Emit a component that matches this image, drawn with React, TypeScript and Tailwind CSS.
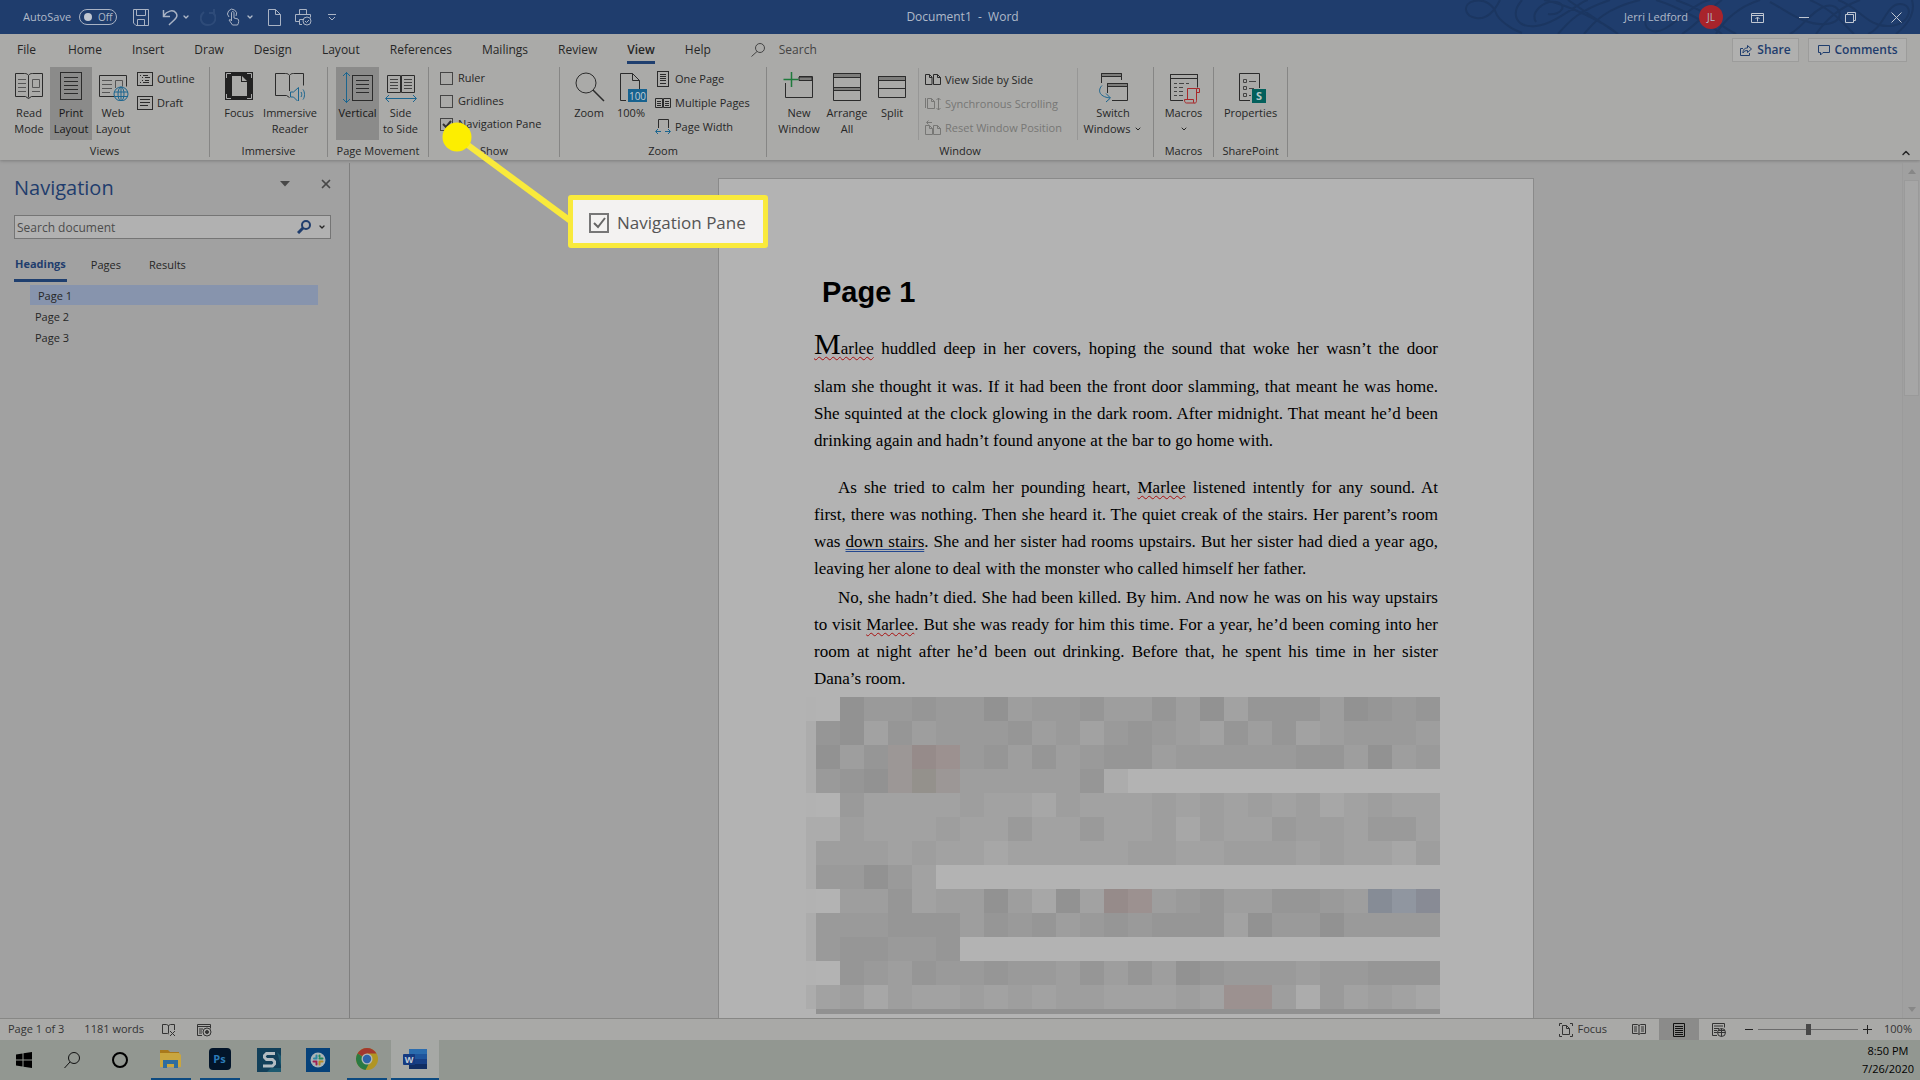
import type { ReactNode } from 'react'
import { ChevronDown, ChevronUp, X } from 'lucide-react'

const INK = '#2b2b2b'
const BLUE = '#1b658f'

function Svg({ w, h, children, stroke = INK, sw = 1, className = '' }: {
  w: number
  h: number
  children: ReactNode
  stroke?: string
  sw?: number
  className?: string
}) {
  return (
    <svg width={w} height={h} viewBox={`0 0 ${w} ${h}`} fill="none" stroke={stroke} strokeWidth={sw} className={`shrink-0 ${className}`} aria-hidden="true">
      {children}
    </svg>
  )
}

/* ---------- ribbon icons ---------- */

const ReadModeIcon = () => (
  <Svg w={30} h={30}>
    <path d="M14.5 4.5c-1-1.5-2-2-4-2h-9v23h10l3 2 3-2h11v-23h-10c-2 0-3 .5-4 2v22" />
    <path d="M4 8.500h8M4 12.500h8M4 16.500h8M4 20.500h8M18.500 8.500h7v8h-7zM18 20.500h8" stroke="#555" />
  </Svg>
)

const PrintLayoutIcon = () => (
  <Svg w={30} h={30}>
    <rect x="4.500" y="1.500" width="21" height="27" />
    <path d="M8 6.500h14M8 10.500h14M8 14.500h14M8 18.500h14M8 22.500h14" />
  </Svg>
)

const WebLayoutIcon = () => (
  <Svg w={32} h={30}>
    <path d="M17 25.500H2.500v-21h27v11" />
    <path d="M5 9.500h10M5 13.500h10M5 17.500h10M5 21.500h8M18.500 17V9.500h7v6" stroke="#555" />
    <g stroke={BLUE}>
      <circle cx="24" cy="23" r="7" />
      <ellipse cx="24" cy="23" rx="3" ry="7" />
      <path d="M17 21h14M17 25.500h14M24 16v14" />
    </g>
  </Svg>
)

const OutlineIcon = () => (
  <Svg w={16} h={14}>
    <rect x=".5" y=".5" width="15" height="13" />
    <path d="M3 3.500h1M6 3.500h5M5 5.500h1M8 5.500h5M5 8.500h1M8 8.500h4M3 10.500h1M6 10.500h6" />
  </Svg>
)

const DraftIcon = () => (
  <Svg w={16} h={14}>
    <rect x=".5" y=".5" width="15" height="13" />
    <path d="M3 3.500h10M3 6.500h10M3 9.500h8" />
  </Svg>
)

const FocusIcon = () => (
  <Svg w={30} h={30}>
    <rect x="1" y="1" width="28" height="28" fill="#222" stroke="none" />
    <path d="M2.500 7V2.500H7M23 2.500h4.500V7M27.500 23v4.500H23M7 27.500H2.500V23" stroke="#aaa" />
    <path d="M8 5h9v6h6v14H8zM18 5l5 5h-5z" fill="#aaaaa8" stroke="none" />
  </Svg>
)

const ImmersiveReaderIcon = () => (
  <Svg w={32} h={30}>
    <path d="M15.500 4.500c-1-1.500-2-2-4-2h-10v22h11l3 2M15.500 20V4.500c1-1.500 2-2 4-2h10v12" />
    <path d="M16.500 21v5h3l5 5V16.500l-5 4.500zM27 21c1 1.500 1 3.500 0 5M29 18.500c2 2.500 2 7.500 0 10" stroke={BLUE} />
  </Svg>
)

const VerticalIcon = () => (
  <Svg w={32} h={34}>
    <rect x="10.500" y="4.500" width="20" height="25" />
    <path d="M14 9.500h13M14 13.500h13M14 17.500h13M14 21.500h13" />
    <path d="M4.500 1v31M1 5l3.500-3.500L8 5M1 28l3.500 3.500L8 28" stroke={BLUE} />
  </Svg>
)

const SideToSideIcon = () => (
  <Svg w={34} h={32}>
    <path d="M3.500 4.500h13v17h-13zM17.500 4.500h13v17h-13z" />
    <path d="M6 8.500h8M6 11.500h8M6 14.500h8M6 17.500h8M20 8.500h8M20 11.500h8M20 14.500h8M20 17.500h8" stroke="#444" />
    <path d="M2 27.500h30M5 24l-3.500 3.500L5 31M29 24l3.500 3.500L29 31" stroke={BLUE} />
  </Svg>
)

const ZoomIcon = () => (
  <Svg w={32} h={32}>
    <circle cx="13" cy="12" r="10" />
    <path d="M20 19l11 11" strokeWidth="1.500" />
  </Svg>
)

const HundredIcon = () => (
  <Svg w={32} h={32}>
    <path d="M11 29.500H5.500v-27h12l7 7V18M17.500 2.500v7h7" />
    <rect x="13" y="18" width="19" height="13" fill="#17628f" stroke="none" />
    <text x="22.500" y="28.500" textAnchor="middle" fontSize="10" fontFamily="Open Sans" fill="#c4cdd3" stroke="none">100</text>
  </Svg>
)

const OnePageIcon = () => (
  <Svg w={16} h={16}>
    <rect x="2.500" y=".5" width="11" height="15" />
    <path d="M5 3.500h6M5 5.500h6M5 7.500h6M5 9.500h6M5 12.500h6" />
  </Svg>
)

const MultiPagesIcon = () => (
  <Svg w={16} h={12}>
    <path d="M.5 1.500h7v9h-7zM8.500 1.500h7v9h-7z" />
    <path d="M2 4.500h4M2 6.500h4M2 8.500h4M10 4.500h4M10 6.500h4M10 8.500h4" />
  </Svg>
)

const PageWidthIcon = () => (
  <Svg w={16} h={16}>
    <path d="M3.500 9V.5h10V9" />
    <path d="M1 12.500h5M10 12.500h5M3 10l-2.500 2.500L3 15M13 10l2.500 2.500L13 15" stroke={BLUE} />
  </Svg>
)

const NewWindowIcon = () => (
  <Svg w={32} h={32}>
    <path d="M2.500 12v14.500h27v-21H16" />
    <path d="M16 6h13v3.500H16z" fill="#7d7d7b" />
    <path d="M.5 8.500h15M8.500 1v15" stroke="#1f7a3c" strokeWidth="1.500" />
  </Svg>
)

const ArrangeIcon = () => (
  <Svg w={32} h={32}>
    <path d="M2.500 2.500h27v4h-27zM2.500 16.500h27v3h-27z" fill="#7d7d7b" />
    <path d="M2.500 2.500h27v27h-27z" />
  </Svg>
)

const SplitIcon = () => (
  <Svg w={32} h={32}>
    <path d="M2.500 5.500h27v4h-27z" fill="#7d7d7b" />
    <path d="M2.500 5.500h27v21h-27zM3 17.500h26" />
  </Svg>
)

const SideBySideIcon = () => (
  <Svg w={16} h={12}>
    <path d="M.5 10.500V.5h4l2.500 2.500v7.500zM8.500 10.500V.5h4l3 3v7zM4.500.5v3H7M12.500.5v3h3" />
  </Svg>
)

const SyncScrollIcon = () => (
  <Svg w={16} h={14} stroke="#777775">
    <path d="M.5 1v10M2.500 11.500V1.500h4l3 3v7zM6.500 1.500v3h3M13.500 1v12M11.500 3l2-2 2 2M11.500 11l2 2 2-2" />
  </Svg>
)

const ResetPosIcon = () => (
  <Svg w={16} h={16} stroke="#777775">
    <path d="M.5 14.500v-9h4l3 3v6zM8.500 14.500v-9h4l3 3v6zM4.500 5.500v3h3M12.500 5.500v3h3M7 2.500H2M3.500.5l-2 2 2 2" />
  </Svg>
)

const SwitchIcon = () => (
  <Svg w={32} h={34}>
    <path d="M4.500 12V2.500h20V9" />
    <path d="M4.500 2.500h20v3h-20zM10.500 12.500h20v3h-20z" fill="#7d7d7b" />
    <path d="M15 29.500h15.500v-17h-20V22" />
    <path d="M5 14.500c-4 4-4 11 8 12.500M9 22.500l4.500 4.500L9 31" stroke={BLUE} />
  </Svg>
)

const MacrosIcon = () => (
  <Svg w={32} h={34}>
    <path d="M15 29.500H2.500v-26h27v13" />
    <path d="M2.500 3.500h27v4h-27z" />
    <path d="M6 12.500h3M11 12.500h5M18 12.500h3M6 16.500h3M11 16.500h4M6 20.500h3M11 20.500h4M6 24.500h3M11 24.500h4" stroke="#444" />
    <path d="M19.500 28V17.500h9M28.500 17.500v12c0 3-2 3-3 2v-3h-9c0 3 1 3.500 2 3.500h8M28.500 17.500h3v4h-3" stroke="#a8282a" />
  </Svg>
)

const PropertiesIcon = () => (
  <Svg w={32} h={34}>
    <path d="M15 29.500H4.500v-27h20V17" />
    <path d="M8.500 8.500h3v3h-3zM8.500 15.500h3v3h-3zM8.500 22.500h3v3h-3zM14 10.500h7M14 17.500h5M14 24.500h2" stroke="#444" />
    <rect x="17" y="18" width="14" height="14" fill="#03605c" stroke="none" />
    <text x="24" y="29" textAnchor="middle" fontSize="11" fontWeight="700" fontFamily="Open Sans" fill="#b7c9c7" stroke="none">S</text>
  </Svg>
)

/* ---------- ribbon pieces ---------- */

function BigButton({ icon, lines, width, active, caret }: {
  icon: ReactNode
  lines: string[]
  width: string
  active?: boolean
  caret?: boolean
}) {
  return (
    <button className={`${width} h-[73px] shrink-0 flex flex-col items-center pt-1 ${active ? 'bg-[#8b8b8a] text-[#161616]' : ''}`}>
      <span className="h-[34px] flex items-start justify-center">{icon}</span>
      {lines.map((line, i) => (
        <span key={line} className="flex items-center gap-1 leading-4 whitespace-nowrap">
          {line}
          {caret && i === lines.length - 1 && lines.length > 1 && <ChevronDown size={8} strokeWidth={3} />}
        </span>
      ))}
      {caret && lines.length === 1 && <span className="h-4 flex items-center"><ChevronDown size={8} strokeWidth={3} /></span>}
    </button>
  )
}

function SmallButton({ icon, label, disabled }: { icon: ReactNode; label: string; disabled?: boolean }) {
  return (
    <button disabled={disabled} className={`h-6 flex items-center gap-1 whitespace-nowrap ${disabled ? 'text-[#777775]' : ''}`}>
      <span className="w-4 flex justify-center">{icon}</span>
      {label}
    </button>
  )
}

function Group({ label, width, children }: { label: string; width: string; children: ReactNode }) {
  return (
    <div className={`${width} h-[90px] shrink-0 flex flex-col border-r border-[#868685]`}>
      <div className="h-[78px] shrink-0 flex items-start">{children}</div>
      <div className="text-center leading-3">{label}</div>
    </div>
  )
}

function Check({ label, checked }: { label: string; checked?: boolean }) {
  return (
    <label className="relative h-[23px] flex items-center gap-[5px] whitespace-nowrap">
      <input type="checkbox" defaultChecked={checked} className="appearance-none size-[13px] border border-[#444]" />
      {checked && (
        <Svg w={13} h={13} stroke="#333" sw={2} className="absolute left-0">
          <path d="M3 6l3 3 5-6" />
        </Svg>
      )}
      {label}
    </label>
  )
}

/* ---------- title bar ---------- */

function TitleBar() {
  const ink = '#a9b3c4'
  return (
    <header className="relative h-[34px] shrink-0 flex items-center bg-[#1f3d6d] text-[#b0bac9] text-[11px]">
      <svg className="absolute right-0 top-0" width="460" height="34" viewBox="0 0 460 34" fill="none" stroke="#1b3661" strokeWidth="2" aria-hidden="true">
        <path d="M40 0c-4 8-12 20-24 18S2 4 14 1s20 6 22 12 14 16 26 20" />
        <path d="M76 22c-6-10 8-22 20-20s6 14-8 12M62 0c-12 14-6 28 14 26s46-26 52-26M84 0c22 4 60 22 74 34M108 0l50 34M150 0c-30 10-40 20-52 34M180 0c-34 8-46 22-56 34" />
        <path d="M188 14c-8 14 4 22 18 14S236 2 250 0M196 0c20 6 50 22 66 34M216 0c30 10 40 24 60 34M262 0c-12 8-22 22-40 34M300 0c-20 6-36 20-44 34M310 2c16 8 34 24 56 22s14-22 0-18-24 22-36 28" />
        <path d="M350 0c20 8 32 22 44 34M400 0c-22 8-34 20-44 34M378 0c20 6 30 28 52 26s24-22 10-22-16 24-32 30M452 0c4 14-6 26-16 34" />
      </svg>
      <div className="relative flex-1 flex items-center pl-[23px]">
        <span>AutoSave</span>
        <button role="switch" aria-checked="false" className="ml-2 w-[38px] h-4 rounded-full border border-[#a9b3c4] flex items-center gap-[6px] pl-1 text-[10px]">
          <span className="size-2 rounded-full bg-[#c0c7d2]" />
          Off
        </button>
        <button aria-label="Save" className="ml-4">
          <Svg w={16} h={17} stroke={ink}><path d="M.5.5h15v16H3l-2.500-2.500zM3.500.5v6h9v-6M4.500 16.500v-6h7v6" /></Svg>
        </button>
        <button aria-label="Undo" className="ml-[13px]">
          <Svg w={16} h={17} stroke={ink}><path d="M1.500 1v6.500H8M1.500 7C5 2 11 0 14 4s-2 7-7 12" strokeWidth="1.500" /></Svg>
        </button>
        <button aria-label="Undo history" className="ml-1"><ChevronDown size={8} strokeWidth={4} /></button>
        <button aria-label="Redo" className="ml-[10px]">
          <Svg w={16} h={17} stroke="#2e4b79"><path d="M4 3c-6 5-3 13 4 13s10-8 5-12M9 4h5V0" strokeWidth="2" /></Svg>
        </button>
        <button aria-label="Touch mode" className="ml-[10px]">
          <Svg w={14} h={18} stroke={ink}><path d="M3 9a4.500 4.500 0 1 1 7-1M5.500 13V5c0-2 2.500-2 2.500 0v5l4 1c1 .5 1 4-.5 6h-5L3 12c1-1 2 0 2.500 1" /></Svg>
        </button>
        <button aria-label="Touch mode options" className="ml-[6px]"><ChevronDown size={8} strokeWidth={4} /></button>
        <button aria-label="New" className="ml-[14px]">
          <Svg w={13} h={17} stroke={ink}><path d="M.5.5h7l5 5v11H.5zM7.500.5v5h5" /></Svg>
        </button>
        <button aria-label="Print preview" className="ml-[14px]">
          <Svg w={17} h={17} stroke={ink}><path d="M4.500 5.500v-5h7v5M4 12.500H.5v-7h15v3M7 15.500H4.500v-5H8" /><circle cx="12" cy="12" r="4" /><path d="M10 12l1.500 1.500L14 11" /></Svg>
        </button>
        <button aria-label="Customize toolbar" className="ml-4">
          <Svg w={8} h={8} stroke={ink}><path d="M0 1.500h8M1 4l3 3 3-3" /></Svg>
        </button>
      </div>
      <div className="relative whitespace-pre text-[12px]">Document1  -  Word</div>
      <div className="relative flex-1 flex items-center justify-end pr-[18px]">
        <span>Jerri Ledford</span>
        <span className="ml-[11px] size-6 rounded-full bg-[#a8242b] flex items-center justify-center text-[10px]">JL</span>
        <button aria-label="Ribbon display options" className="ml-7">
          <Svg w={13} h={11} stroke="#c0c7d2"><path d="M.5 1.500h12v9H.5zM.5 3.500h12M6.500 9.500v-4M4.500 7l2-2 2 2" /></Svg>
        </button>
        <button aria-label="Minimize" className="ml-[35px] w-[10px] h-[10px] flex items-center"><span className="w-full h-px bg-[#c0c7d2]" /></button>
        <button aria-label="Restore" className="ml-9">
          <Svg w={11} h={11} stroke="#c0c7d2"><path d="M.5 2.500h8v8h-8zM2.500 2.500v-2h8v8h-2" /></Svg>
        </button>
        <button aria-label="Close" className="ml-[35px]">
          <Svg w={11} h={11} stroke="#c0c7d2"><path d="M.5.5l10 10M10.500.5l-10 10" /></Svg>
        </button>
      </div>
    </header>
  )
}

/* ---------- ribbon ---------- */

const TABS = ['Home', 'Insert', 'Draw', 'Design', 'Layout', 'References', 'Mailings', 'Review', 'View', 'Help']

function TabRow() {
  return (
    <div className="h-[33px] shrink-0 flex items-center pl-[17px] pr-[13px] pb-[2px] text-[12px]">
      <nav className="flex items-center">
        <button className="mr-8">File</button>
        <div className="flex items-center gap-[30px]">
          {TABS.map(tab => (
            <button key={tab} className={tab === 'View' ? 'h-7 pt-[3px] border-b-[3px] border-[#1f3f6f] font-semibold' : ''}>
              {tab}
            </button>
          ))}
        </div>
      </nav>
      <button className="ml-10 flex items-center gap-[14px] text-[#444]">
        <Svg w={14} h={14} stroke="#444"><circle cx="9" cy="5" r="4.500" /><path d="M6 8.500l-5.500 5" /></Svg>
        Search
      </button>
      <div className="ml-auto flex gap-[9px] font-semibold text-[#1f3d6d]">
        <button className="h-6 w-[67px] flex items-center justify-center gap-[5px] border border-[#9c9c9b] bg-[#b0b0af]">
          <Svg w={12} h={12} stroke="#1f3d6d"><path d="M3 4.500H.5v7h9V9M3 9c0-4 2-5 4.500-5V1.500L11.500 5 7.500 8.500V6.500C5.500 6.500 4 7 3 9z" /></Svg>
          Share
        </button>
        <button className="h-6 w-[99px] flex items-center justify-center gap-[5px] border border-[#9c9c9b] bg-[#b0b0af]">
          <Svg w={12} h={12} stroke="#1f3d6d"><path d="M.5 1.500h11v7H5l-2.500 2.500V8.500h-2z" /></Svg>
          Comments
        </button>
      </div>
    </div>
  )
}

function Ribbon() {
  return (
    <div className="h-[93px] shrink-0 flex text-[11px]">
      <Group label="Views" width="w-[210px]">
        <div className="w-2" />
        <BigButton icon={<ReadModeIcon />} lines={['Read', 'Mode']} width="w-[42px]" />
        <BigButton icon={<PrintLayoutIcon />} lines={['Print', 'Layout']} width="w-[42px]" active />
        <BigButton icon={<WebLayoutIcon />} lines={['Web', 'Layout']} width="w-[42px]" />
        <div className="flex flex-col pl-[3px]">
          <SmallButton icon={<OutlineIcon />} label="Outline" />
          <SmallButton icon={<DraftIcon />} label="Draft" />
        </div>
      </Group>
      <Group label="Immersive" width="w-[118px]">
        <div className="w-2" />
        <BigButton icon={<FocusIcon />} lines={['Focus']} width="w-[42px]" />
        <BigButton icon={<ImmersiveReaderIcon />} lines={['Immersive', 'Reader']} width="w-[60px]" />
      </Group>
      <Group label="Page Movement" width="w-[101px]">
        <div className="w-2" />
        <BigButton icon={<VerticalIcon />} lines={['Vertical']} width="w-[43px]" active />
        <BigButton icon={<SideToSideIcon />} lines={['Side', 'to Side']} width="w-[43px]" />
      </Group>
      <Group label="Show" width="w-[131px]">
        <div className="flex flex-col pl-[11px]">
          <Check label="Ruler" />
          <Check label="Gridlines" />
          <Check label="Navigation Pane" checked />
        </div>
      </Group>
      <Group label="Zoom" width="w-[207px]">
        <div className="w-2" />
        <BigButton icon={<ZoomIcon />} lines={['Zoom']} width="w-[42px]" />
        <BigButton icon={<HundredIcon />} lines={['100%']} width="w-[42px]" />
        <div className="flex flex-col pl-[3px]">
          <SmallButton icon={<OnePageIcon />} label="One Page" />
          <SmallButton icon={<MultiPagesIcon />} label="Multiple Pages" />
          <SmallButton icon={<PageWidthIcon />} label="Page Width" />
        </div>
      </Group>
      <Group label="Window" width="w-[387px]">
        <div className="w-2" />
        <BigButton icon={<NewWindowIcon />} lines={['New', 'Window']} width="w-[48px]" />
        <BigButton icon={<ArrangeIcon />} lines={['Arrange', 'All']} width="w-[48px]" />
        <BigButton icon={<SplitIcon />} lines={['Split']} width="w-[42px]" />
        <div className="ml-[5px] mt-px w-[160px] border-x border-[#979796] pl-[6px] flex flex-col">
          <SmallButton icon={<SideBySideIcon />} label="View Side by Side" />
          <SmallButton icon={<SyncScrollIcon />} label="Synchronous Scrolling" disabled />
          <SmallButton icon={<ResetPosIcon />} label="Reset Window Position" disabled />
        </div>
        <BigButton icon={<SwitchIcon />} lines={['Switch', 'Windows']} width="w-[70px]" caret />
      </Group>
      <Group label="Macros" width="w-[60px]">
        <BigButton icon={<MacrosIcon />} lines={['Macros']} width="w-[59px]" caret />
      </Group>
      <Group label="SharePoint" width="w-[74px]">
        <BigButton icon={<PropertiesIcon />} lines={['Properties']} width="w-[73px]" />
      </Group>
      <button aria-label="Collapse the ribbon" className="ml-auto mr-2 self-end mb-px"><ChevronUp size={12} strokeWidth={3} /></button>
    </div>
  )
}

/* ---------- navigation pane ---------- */

function NavigationPane() {
  return (
    <aside className="w-[350px] shrink-0 border-r border-[#7f7f7f] text-[11px]">
      <div className="flex items-center pl-[14px] pr-4 h-[50px]">
        <h2 className="text-[20px] text-[#1f3d6d]">Navigation</h2>
        <button aria-label="Pane options" className="ml-auto mb-2">
          <Svg w={10} h={6}><path d="M0 0h10L5 5.500z" fill="#484848" stroke="none" /></Svg>
        </button>
        <button aria-label="Close pane" className="ml-[29px] mb-2 text-[#484848]"><X size={14} strokeWidth={3} /></button>
      </div>
      <div className="mt-[2px] ml-[14px] mr-[18px] h-6 flex items-center border border-[#757575] bg-[#b1b1b1] pr-1">
        <input aria-label="Search document" placeholder="Search document" className="flex-1 min-w-0 h-full pl-[2px] outline-none placeholder:text-[#4c4c4c] text-[12px]" />
        <button aria-label="Search">
          <Svg w={15} h={14} stroke="#1f3d6d" sw={2}><circle cx="9" cy="5" r="4" /><path d="M6 8l-5 5" strokeWidth="3" /></Svg>
        </button>
        <button aria-label="Search options" className="ml-[6px]"><ChevronDown size={8} strokeWidth={4} /></button>
      </div>
      <div role="tablist" className="mt-[14px] ml-[14px] flex items-start">
        <button role="tab" aria-selected="true" className="h-[29px] px-px pb-1 border-b-[3px] border-[#1f3f6f] font-bold text-[#1f3d6d]">Headings</button>
        <button role="tab" aria-selected="false" className="ml-6 h-[25px]">Pages</button>
        <button role="tab" aria-selected="false" className="ml-7 h-[25px]">Results</button>
      </div>
      <ul className="mt-[3px] ml-[30px] mr-[31px] leading-[21px]">
        <li><a href="#page-1" className="block h-5 leading-[21px] pl-2 bg-[#8794ad]">Page 1</a></li>
        <li><a href="#page-2" className="block pl-[5px] mt-px">Page 2</a></li>
        <li><a href="#page-3" className="block pl-[5px]">Page 3</a></li>
      </ul>
    </aside>
  )
}

/* ---------- document ---------- */

function Line({ children, last, indent }: { children: ReactNode; last?: boolean; indent?: boolean }) {
  return (
    <span className={`block whitespace-nowrap ${indent ? 'pl-6' : ''} ${last ? '' : '[text-align-last:justify]'}`}>
      {children}
    </span>
  )
}

function Typo({ children }: { children: ReactNode }) {
  return <span className="underline decoration-wavy decoration-[#a80f0f] decoration-1 underline-offset-2">{children}</span>
}

// One digit per tile: 0 is the darkest grey, 8 almost paper. Letters are tinted tiles.
const TILE_ROWS = [
  ' 1332331433244241522241232',
  '21524333243532345242543334',
  '142trs32424322433333224143',
  '321tut444442' + '7             ',
  ' 3555545564555454545465455',
  '74555455355355464553445335',
  '44454556555554455444545564',
  '33135' + '                     ',
  ' 44254414615rs432442234bcd',
  '33322242324323222513313333',
  '322332' + '                    ',
  ' 2342332334242412333433222',
  '54645545454455545ss4735456',
]

const TILE_GREYS = ['#8d8d8d', '#929292', '#969696', '#9a9a9a', '#9e9e9e', '#a2a2a2', '#a7a7a7', '#acacac', '#b0b0b0']
const TILE_TINTS: Record<string, string> = {
  r: '#968b8a',
  s: '#9c9190',
  t: '#9c9796',
  u: '#94918c',
  b: '#868c96',
  c: '#9096a0',
  d: '#888b95',
  ' ': '#b3b3b3',
}

function tileColor(tile: string) {
  return TILE_TINTS[tile] ?? TILE_GREYS[Number(tile)]
}

function RedactedText() {
  return (
    <div className="-ml-2 -mr-[2px] mt-[5px]" aria-hidden="true">
      {TILE_ROWS.map((row, y) => (
        <div key={y} className="h-6 flex">
          <span className={`w-[10px] ${row[0] === ' ' ? 'bg-[#b2b2b2]' : 'bg-[#acacac]'}`} />
          {row.split('').map((tile, x) => (
            <span key={x} className="flex-1" style={{ backgroundColor: tileColor(tile) }} />
          ))}
        </div>
      ))}
      <div className="ml-[10px] h-[5px] bg-[#919191]" />
    </div>
  )
}

function DocumentPage() {
  return (
    <article className="mx-auto mt-[15px] w-[816px] h-full border border-[#8a8a8a] bg-[#b3b3b3] px-[95px] text-black">
      <h1 className="mt-[95px] pl-2 font-['Liberation_Sans',sans-serif] font-bold text-[29px] leading-9">Page 1</h1>
      <div className="font-['Liberation_Serif',serif] text-[17px] leading-[27px]">
        <p className="mt-[10px]">
          <span className="block leading-[48px]"><Line><Typo><span className="text-[30px]">M</span>arlee</Typo> huddled deep in her covers, hoping the sound that woke her wasn’t the door</Line></span>
          <Line>slam she thought it was. If it had been the front door slamming, that meant he was home.</Line>
          <Line>She squinted at the clock glowing in the dark room. After midnight. That meant he’d been</Line>
          <Line last>drinking again and hadn’t found anyone at the bar to go home with.</Line>
        </p>
        <p className="mt-5">
          <Line indent>As she tried to calm her pounding heart, <Typo>Marlee</Typo> listened intently for any sound. At</Line>
          <Line>first, there was nothing. Then she heard it. The quiet creak of the stairs. Her parent’s room</Line>
          <Line>was <span className="underline decoration-double decoration-[#24488f] decoration-1 underline-offset-2">down stairs</span>. She and her sister had rooms upstairs. But her sister had died a year ago,</Line>
          <Line last>leaving her alone to deal with the monster who called himself her father.</Line>
        </p>
        <p className="mt-[2px]">
          <Line indent>No, she hadn’t died. She had been killed. By him. And now he was on his way upstairs</Line>
          <Line>to visit <Typo>Marlee</Typo>. But she was ready for him this time. For a year, he’d been coming into her</Line>
          <Line>room at night after he’d been out drinking. Before that, he spent his time in her sister</Line>
          <Line last>Dana’s room.</Line>
        </p>
      </div>
      <RedactedText />
    </article>
  )
}

function ScrollBar() {
  return (
    <div className="w-[18px] shrink-0 flex flex-col items-center border-l border-[#9b9b9b] bg-[#a0a0a0]">
      <span className="h-[17px] flex items-center"><Svg w={8} h={5}><path d="M4 0l4 5H0z" fill="#878787" stroke="none" /></Svg></span>
      <span className="w-[15px] h-[216px] bg-[#a6a6a6] border border-[#9a9a9a]" />
      <span className="mt-auto h-[17px] flex items-center"><Svg w={8} h={5}><path d="M0 0h8L4 5z" fill="#878787" stroke="none" /></Svg></span>
    </div>
  )
}

/* ---------- status bar ---------- */

function StatusBar() {
  return (
    <footer className="h-[22px] shrink-0 flex items-center bg-[#a9a9a7] border-t border-[#878785] text-[11px] text-[#333] pl-2 pr-2">
      <span>Page 1 of 3</span>
      <span className="ml-5">1181 words</span>
      <button aria-label="Proofing errors" className="ml-[18px]">
        <Svg w={14} h={14} stroke="#333"><path d="M6.500 11l-1-.5h-5V1.500h4l2 1v8M6.500 2.500l2-1h4V7M8 8l5 5M13 8l-5 5" /></Svg>
      </button>
      <button aria-label="Macro recording" className="ml-[21px]">
        <Svg w={15} h={14} stroke="#333"><path d="M5 12.500H.5v-11h13v4M.5 3.500h13M2 6h4M2 8h3M2 10h3" /><circle cx="10" cy="9" r="4" /><circle cx="10" cy="9" r="1.500" fill="#333" /></Svg>
      </button>
      <button className="ml-auto flex items-center gap-1">
        <Svg w={14} h={14} stroke="#333"><path d="M.5 3V.5H3M11 .5h2.500V3M13.500 11v2.500H11M3 13.500H.5V11M3.500 2.500h4l3 3v6h-7zM7.500 2.500v3h3" /></Svg>
        Focus
      </button>
      <button aria-label="Read mode" className="ml-[25px]">
        <Svg w={14} h={13} stroke="#333"><path d="M.5 1.500h5l1.500 1 1.500-1h5v9h-5l-1.500 1-1.500-1h-5zM7 2v9M2 4h3M2 6h3M2 8h3M9 4h3M9 6h3M9 8h3" /></Svg>
      </button>
      <button aria-label="Print layout" className="ml-[13px] w-10 h-full flex items-center justify-center bg-[#8b8b8a]">
        <Svg w={12} h={14} stroke="#111"><path d="M.5.5h11v13H.5zM2 3.500h8M2 5.500h8M2 7.500h8M2 9.500h8M2 11.500h8" /></Svg>
      </button>
      <button aria-label="Web layout" className="ml-[13px]">
        <Svg w={14} h={14} stroke="#333"><path d="M5 12.500H.5v-12h12v4M2 3h9M2 5.500h5M2 7.500h3M2 9.500h3" /><circle cx="9.500" cy="9.500" r="4" /><path d="M5.500 9.500h8M9.500 5.500v8M6 7.500h7" /></Svg>
      </button>
      <button aria-label="Zoom out" className="ml-[19px] w-2 h-2 flex items-center"><span className="w-full h-px bg-[#222]" /></button>
      <input
        type="range"
        aria-label="Zoom"
        min={0}
        max={100}
        defaultValue={50}
        className="ml-[5px] w-[100px] h-3 appearance-none bg-transparent [&::-webkit-slider-runnable-track]:h-px [&::-webkit-slider-runnable-track]:bg-[#6b6b6b] [&::-webkit-slider-thumb]:appearance-none [&::-webkit-slider-thumb]:w-[5px] [&::-webkit-slider-thumb]:h-[11px] [&::-webkit-slider-thumb]:-mt-[5px] [&::-webkit-slider-thumb]:bg-[#484848]"
      />
      <button aria-label="Zoom in" className="ml-[5px]">
        <Svg w={9} h={9} stroke="#222"><path d="M0 4.500h9M4.500 0v9" /></Svg>
      </button>
      <span className="ml-3">100%</span>
    </footer>
  )
}

/* ---------- taskbar ---------- */

function TaskButton({ label, children, width = 'w-[49px]', open, active }: {
  label: string
  children: ReactNode
  width?: string
  open?: boolean
  active?: boolean
}) {
  return (
    <button aria-label={label} className={`${width} h-full shrink-0 flex flex-col items-center ${active ? 'bg-[#a6a8a5]' : ''}`}>
      <span className="flex-1 flex items-center justify-center">{children}</span>
      {(open || active) && <span className={`h-[2px] bg-[#0d4a80] ${active ? 'w-full' : 'w-10'}`} />}
    </button>
  )
}

function TaskBar() {
  return (
    <div className="h-10 shrink-0 flex items-center bg-[#929791] text-black">
      <TaskButton label="Start" width="w-12">
        <Svg w={16} h={16}><path d="M0 2.500l6.500-1v6H0zM7.500 1.300L16 0v7.500H7.500zM0 8.500h6.500v6l-6.500-1zM7.500 8.500H16V16l-8.500-1.300z" fill="#000" stroke="none" /></Svg>
      </TaskButton>
      <TaskButton label="Search" width="w-12">
        <Svg w={16} h={17} stroke="#111"><circle cx="10" cy="6" r="5.500" /><path d="M6 10l-5.500 6" /></Svg>
      </TaskButton>
      <TaskButton label="Cortana" width="w-12">
        <Svg w={16} h={16} stroke="#000" sw={2}><circle cx="8" cy="8" r="7" /></Svg>
      </TaskButton>
      <div className="w-[2px]" />
      <TaskButton label="File Explorer" open>
        <Svg w={24} h={20}>
          <g stroke="none">
            <path d="M1 1h8l2 2h9v3H1z" fill="#a9791b" />
            <path d="M1 4h19l2 2v12H1z" fill="#c9a63f" />
            <path d="M4 19v-8h15v8h-4v-4H8v4z" fill="#2f6d9f" />
          </g>
        </Svg>
      </TaskButton>
      <TaskButton label="Photoshop" open>
        <span className="size-[22px] rounded-[4px] bg-[#02152a] text-[#2c7bb8] text-[11px] font-bold flex items-center justify-center">Ps</span>
      </TaskButton>
      <TaskButton label="Snagit">
        <span className="size-6 bg-[#12405a] flex items-center justify-center">
          <Svg w={24} h={24} stroke="#b4bdc2" sw={3}>
            <path d="M14 20h10v4H10zM20 4l4 4v10z" fill="#1d5a70" stroke="none" />
            <path d="M18 5.500H9.500L7.500 7.500v2l2 2h6l2 2v2.500l-2 2H6" />
          </Svg>
        </span>
      </TaskButton>
      <TaskButton label="Slack">
        <span className="size-6 bg-[#06427a] flex items-center justify-center">
          <Svg w={16} h={16}>
            <circle cx="8" cy="8" r="7.500" fill="#a9b3b6" stroke="none" />
            <g strokeWidth="2" strokeLinecap="round">
              <path d="M6.500 3.500v3M4 6.500h2" stroke="#2a87a5" />
              <path d="M9.500 6.500h3M9.500 3.500v1" stroke="#1f8a5a" />
              <path d="M9.500 9.500v3M10.500 9.500h2" stroke="#b58a26" />
              <path d="M3.500 9.500h3M6.500 11v1.500" stroke="#a01f50" />
            </g>
          </Svg>
        </span>
      </TaskButton>
      <TaskButton label="Chrome" open>
        <Svg w={22} h={22}>
          <g stroke="none">
            <circle cx="11" cy="11" r="11" fill="#b09524" />
            <path d="M11 11L1.500 5.500a11 11 0 0 1 19 0H11z" fill="#a3382e" />
            <path d="M1.500 5.500a11 11 0 0 0 8 16.400l4.500-8.400z" fill="#2a7a43" />
            <circle cx="11" cy="11" r="5.500" fill="#b5b8b5" />
            <circle cx="11" cy="11" r="4.200" fill="#2f63a8" />
          </g>
        </Svg>
      </TaskButton>
      <TaskButton label="Word" active width="w-12">
        <Svg w={24} h={22}>
          <g stroke="none">
            <path d="M6 1h18v5H6z" fill="#2b6cae" />
            <path d="M6 6h18v5H6z" fill="#1f559c" />
            <path d="M6 11h18v5H6z" fill="#173f85" />
            <path d="M6 16h18v5H6z" fill="#102d63" />
            <rect y="6" width="12" height="11" rx="1" fill="#143a80" />
            <text x="6" y="15" textAnchor="middle" fontSize="9" fontWeight="700" fontFamily="Open Sans" fill="#c5ccd6">W</text>
          </g>
        </Svg>
      </TaskButton>
      <div className="ml-auto mr-[6px] text-center text-[11px] leading-[18px]">
        <div>8:50 PM</div>
        <div>7/26/2020</div>
      </div>
    </div>
  )
}

/* ---------- callout that lies over the window ---------- */

function Callout() {
  return (
    <div className="absolute left-[442px] top-[122px] pointer-events-none">
      <svg width="140" height="110" viewBox="0 0 140 110" className="absolute left-0 top-0" aria-hidden="true">
        <path d="M15 15l115 85" stroke="#f9ea3c" strokeWidth="6" />
        <circle cx="15" cy="15" r="14.500" fill="#fdee00" />
      </svg>
      <div className="absolute left-[126px] top-[73px] w-[200px] h-[53px] rounded-[3px] border-[5px] border-[#f9ea3c] bg-[#f3f2f1] flex items-center gap-2 pl-4 pt-[2px] text-[17px] text-[#555] whitespace-nowrap">
        <Svg w={20} h={20} stroke="#777" sw={2}><path d="M1 1h18v18H1z" /><path d="M5 10l4 4 7-9" stroke="#666" /></Svg>
        Navigation Pane
      </div>
    </div>
  )
}

export default function App() {
  return (
    <div className="relative h-screen flex flex-col overflow-hidden bg-[#a1a1a1] text-[#262626] font-['Open_Sans','Noto_Sans',sans-serif]">
      <TitleBar />
      <div className="shrink-0 bg-[#aaaaa8] shadow-[0_1px_3px_#7c7c7c]">
        <TabRow />
        <Ribbon />
      </div>
      <main className="flex-1 min-h-0 flex pt-[3px]">
        <NavigationPane />
        <div className="flex-1 min-w-0 overflow-hidden">
          <DocumentPage />
        </div>
        <ScrollBar />
      </main>
      <StatusBar />
      <TaskBar />
      <Callout />
    </div>
  )
}
